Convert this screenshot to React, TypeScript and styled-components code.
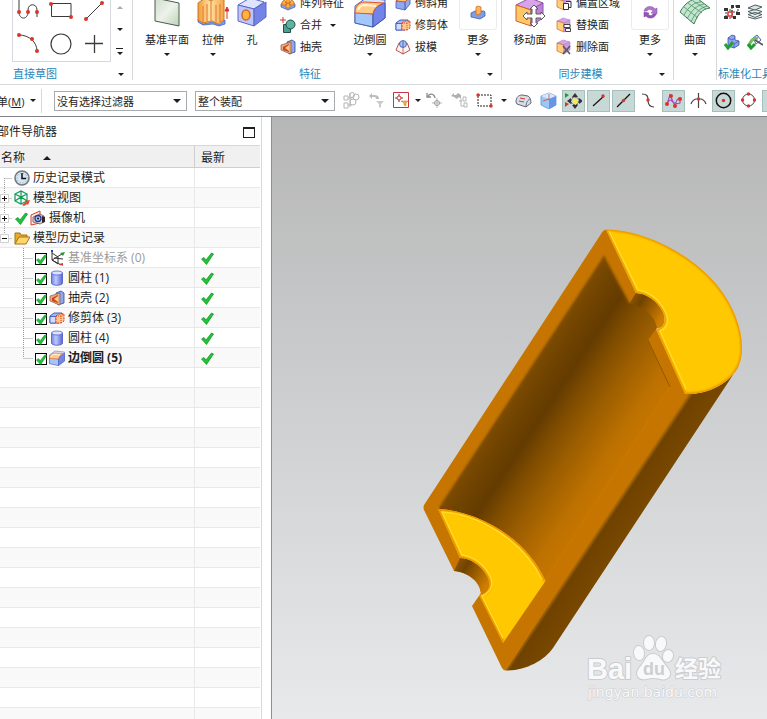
import React from "react";
import styled, { createGlobalStyle, css } from "styled-components";

const GlobalStyle = createGlobalStyle`
  * { box-sizing: border-box; }
  html, body { margin: 0; padding: 0; height: 100%; }
  body {
    font-family: "Open Sans", "Noto Sans CJK SC", sans-serif;
    font-size: 12px;
    color: #1e1e1e;
    background: #fff;
    overflow: hidden;
  }
  button, select { font: inherit; color: inherit; }
`;

const Shell = styled.div`
  display: flex;
  flex-direction: column;
  height: 100vh;
  overflow: hidden;
`;

/* ---------- ribbon ---------- */
const Ribbon = styled.header`
  display: flex;
  align-items: flex-end;
  height: 85px;
  padding-bottom: 4px;
  border-bottom: 1px solid #d5d8db;
  overflow: hidden;
  flex: none;
  font-size: 11px;
`;

const Group = styled.section<{ $w?: number }>`
  display: flex;
  flex-direction: column;
  height: 94px;
  ${(p) => (p.$w ? css`flex: 0 0 ${p.$w}px;` : css`flex: 1 0 60px;`)}
  border-right: 1px solid #d5d8db;
  white-space: nowrap;
`;

const GroupBody = styled.div<{ $pad?: number }>`
  display: flex;
  align-items: flex-end;
  height: 76px;
  padding-left: ${(p) => p.$pad ?? 0}px;
`;

const GroupFooter = styled.div<{ $left?: number }>`
  display: flex;
  align-items: center;
  height: 18px;
  padding: 6px 8px 0 ${(p) => p.$left ?? 8}px;
  color: #2a86b8;
  line-height: 12px;
`;

const FooterLabel = styled.span<{ $center?: boolean }>`
  flex: ${(p) => (p.$center ? "1" : "none")};
  text-align: center;
`;

const Launcher = styled.button`
  margin-left: auto;
  padding: 0;
  border: 0;
  background: none;
  display: flex;
`;

const CaretShape = styled.span<{ $muted?: boolean; $up?: boolean; $big?: boolean }>`
  display: block;
  width: 0;
  height: 0;
  flex: none;
  border: ${(p) => (p.$big ? 4 : 3)}px solid transparent;
  ${(p) =>
    p.$up
      ? css`border-top: 0; border-bottom-color: ${p.$muted ? "#a9a9a9" : "#1e1e1e"};`
      : css`border-bottom: 0; border-top-color: #1e1e1e;`}
`;

const BigButton = styled.button<{ $w: number }>`
  display: flex;
  flex-direction: column;
  align-items: center;
  gap: 4px;
  width: ${(p) => p.$w}px;
  padding: 0 0 2px;
  border: 0;
  background: none;
  line-height: 16px;
  flex: none;
`;

const BigLabel = styled.span`
  display: flex;
  flex-direction: column;
  align-items: center;
  height: 28px;
  gap: 5px;
`;

const MoreFrame = styled.span`
  display: flex;
  align-items: center;
  justify-content: center;
  width: 38px;
  height: 36px;
  margin-bottom: -2px;
  border: 1px solid #e9ebed;
  border-radius: 3px;
`;

const Stack = styled.div<{ $ml?: number; $w: number }>`
  display: flex;
  flex-direction: column;
  width: ${(p) => p.$w}px;
  margin-left: ${(p) => p.$ml ?? 0}px;
  padding-bottom: 4px;
  flex: none;
`;

const SmallButton = styled.button`
  display: flex;
  align-items: center;
  gap: 4px;
  height: 22px;
  padding: 0;
  border: 0;
  background: none;
  line-height: 16px;
  white-space: nowrap;
`;

const SmallText = styled.span`
  margin-right: 4px;
`;

const Gallery = styled.div`
  display: grid;
  grid-template-columns: repeat(3, 33px);
  width: 99px;
  height: 68px;
  border: 1px solid #d5d8dc;
  margin-left: 12px;
`;

const GalleryButton = styled.button`
  width: 33px;
  height: 33px;
  padding: 0;
  border: 0;
  background: none;
`;

const GalleryScroll = styled.div`
  display: flex;
  flex-direction: column;
  width: 17px;
  height: 66px;
`;

const ScrollButton = styled.button`
  display: flex;
  flex-direction: column;
  align-items: center;
  justify-content: center;
  gap: 3px;
  flex: 1;
  padding: 0;
  border: 0;
  background: none;
`;

const CaretBar = styled.span`
  width: 7px;
  height: 1px;
  background: #1e1e1e;
`;

const IconGrid = styled.div`
  display: grid;
  grid-template-columns: 16px 16px;
  gap: 14px 7px;
  padding: 0 0 12px 7px;
`;

const PlainButton = styled.button`
  display: flex;
  padding: 0;
  border: 0;
  background: none;
`;

/* ---------- selection bar ---------- */
const SelectionBar = styled.nav`
  display: flex;
  align-items: center;
  height: 32px;
  flex: none;
  border-bottom: 1px solid #7f858b;
  font-size: 11px;
  overflow: hidden;
`;

const MenuButton = styled.button`
  display: flex;
  align-items: center;
  gap: 6px;
  width: 56px;
  height: 24px;
  margin: 0 12px 0 -14px;
  padding: 0;
  border: 0;
  border-right: 1px solid #d5d8db;
  background: none;
  flex: none;
  white-space: nowrap;
`;

const SelectBox = styled.label<{ $w: number }>`
  display: flex;
  align-items: center;
  width: ${(p) => p.$w}px;
  height: 20px;
  margin-right: 8px;
  padding-right: 5px;
  border: 1px solid #a8abae;
  background: #fff;
  flex: none;
`;

const Select = styled.select`
  appearance: none;
  flex: 1;
  min-width: 0;
  height: 18px;
  padding: 1px 2px 0;
  border: 0;
  background: transparent;
  outline: none;
`;

const ToolStrip = styled.div`
  display: flex;
  gap: 2px;
  margin-left: -3px;
`;

const ToolButton = styled.button<{ $on?: boolean }>`
  display: flex;
  align-items: center;
  justify-content: center;
  width: 23px;
  height: 22px;
  padding: 0;
  border: 1px solid ${(p) => (p.$on ? "#a5c0bb" : "transparent")};
  background: ${(p) => (p.$on ? "#c8d8d6" : "none")};
  flex: none;
`;

const ToolCaret = styled.button<{ $w: number }>`
  display: flex;
  align-items: center;
  justify-content: center;
  width: ${(p) => p.$w}px;
  padding: 0;
  border: 0;
  background: none;
`;

/* ---------- main area ---------- */
const Workspace = styled.main`
  display: grid;
  grid-template-columns: 272px minmax(0, 1fr);
  flex: 1;
  min-height: 0;
`;

const SideDock = styled.div`
  display: flex;
  min-height: 0;
  background: #fff;
  border-right: 1px solid #8b9096;
  overflow: hidden;
`;

const Panel = styled.aside`
  width: 262px;
  background: #fff;
  border-right: 1px solid #d5d8db;
  overflow: hidden;
`;

const PanelTitle = styled.div`
  display: flex;
  align-items: center;
  justify-content: space-between;
  height: 28px;
  margin-left: -3px;
  padding: 2px 6px 0 0;
  line-height: 20px;
`;

const Maximize = styled.button`
  width: 12px;
  height: 11px;
  padding: 0;
  border: 1px solid #1e1e1e;
  border-top-width: 2px;
  background: #fff;
`;

const TreeTable = styled.table`
  width: 260px;
  table-layout: fixed;
  border-collapse: separate;
  border-spacing: 0;
  border-top: 1px solid #d5d8db;
`;

const HeadCell = styled.th<{ $first?: boolean }>`
  width: ${(p) => (p.$first ? "195px" : "auto")};
  height: 22px;
  padding: 2px 0 0 ${(p) => (p.$first ? 1 : 6)}px;
  background: #f0f0f0;
  border-bottom: 1px solid #cfcfcf;
  border-right: ${(p) => (p.$first ? "1px solid #cfcfcf" : "0")};
  font-weight: 400;
  text-align: left;
  line-height: 18px;
`;

const HeadInner = styled.span`
  display: flex;
  align-items: center;
  gap: 18px;
`;

const Row = styled.tr`
  &:nth-child(even) { background: #f9f9f9; }
`;

const Cell = styled.td<{ $first?: boolean }>`
  height: 20px;
  padding: 0 0 0 ${(p) => (p.$first ? 0 : 6)}px;
  border-bottom: 1px solid #e8e8e8;
  border-right: ${(p) => (p.$first ? "1px solid #e8e8e8" : "0")};
  vertical-align: top;
`;

const TreeItem = styled.div<{ $muted?: boolean; $bold?: boolean }>`
  display: flex;
  align-items: center;
  height: 20px;
  line-height: 20px;
  white-space: nowrap;
  color: ${(p) => (p.$muted ? "#9b9b9b" : "inherit")};
  font-weight: ${(p) => (p.$bold ? 700 : 400)};
  margin-bottom: -1px;
  & > svg { flex: none; }
`;

const TreeText = styled.span`
  margin-left: 3px;
`;

const MarkBox = styled.span`
  display: flex;
  margin: 0 2px 0 1px;
`;

const TickLabel = styled.label`
  display: inline-flex;
  width: 12px;
  height: 12px;
  margin: 1px 2px 0 0;
  border: 1px solid #000;
  background: #fff;
  flex: none;
  & > svg { flex: none; }
`;

const HiddenCheckbox = styled.input`
  appearance: none;
  width: 0;
  height: 0;
  margin: 0;
`;

const Viewport = styled.div`
  min-width: 0;
  min-height: 0;
  overflow: hidden;
  background: linear-gradient(#b6b6b6, #c6c7c8 33%, #d9dadc 70%, #e8e9eb);
  & > svg { display: block; width: 100%; height: 100%; }
`;

/* ---------- icons ---------- */
const ink = "#3b3b3b";
const red = "#d8352b";

const Dot = ({ x, y, r = 2 }: { x: number; y: number; r?: number }) => <circle cx={x} cy={y} r={r} fill={red} stroke="none" />;

type DrawProps = { w?: number; h?: number; box?: string; children: React.ReactNode };
const Draw = ({ w = 16, h = w, box, children }: DrawProps) => (
  <svg width={w} height={h} viewBox={box ?? `0 0 ${w} ${h}`} fill="none" display="block" aria-hidden="true">
    {children}
  </svg>
);

const sketchTools = [
  { name: "轮廓", art: <><path d="M6 5v12c0 8 9 8 9 0v-2c0-7 9-7 9 0v7" stroke={ink} /><Dot x={6} y={17} /><Dot x={15} y={17} /><Dot x={24} y={17} /></> },
  { name: "矩形", art: <><path d="M5.500 8.500h19.500v13h-19.500z" stroke={ink} /><Dot x={5} y={9} /><Dot x={25} y={22} /></> },
  { name: "直线", art: <><path d="M7 24L23 8" stroke={ink} /><Dot x={7} y={24} /><Dot x={23} y={8} /></> },
  { name: "圆弧", art: <><path d="M6 7c10 0 18 7 18 16" stroke={ink} /><Dot x={6} y={7} /><Dot x={19} y={11} /><Dot x={24} y={23} /></> },
  { name: "圆", art: <circle cx="15" cy="16" r="10" stroke={ink} strokeWidth="1.200" /> },
  { name: "点", art: <path d="M6 15.500h18M15.500 7v18" stroke={ink} strokeWidth="1.300" /> },
];

const PlaneIcon = () => (
  <Draw w={28} h={32}>
    <defs><linearGradient id="pl" x1="0" y1="0" x2="1" y2="1"><stop offset="0" stopColor="#cfdccb" /><stop offset=".5" stopColor="#edf2ea" /><stop offset="1" stopColor="#b9d3b4" /></linearGradient></defs>
    <path d="M2 2l24 5v23L2 25z" fill="url(#pl)" stroke="#4c5a50" />
  </Draw>
);
const ExtrudeIcon = () => (
  <Draw w={32}>
    <defs><linearGradient id="ex"><stop offset="0" stopColor="#f09a38" /><stop offset=".45" stopColor="#ffe2a6" /><stop offset="1" stopColor="#f2a548" /></linearGradient></defs>
    <path d="M1 23l5 5 10-2 6 3 6-5v4l-6 2-6-2-10 1-5-3z" fill="#7fa0e8" stroke="#4666c0" strokeWidth=".8" />
    <path d="M1 7l7-5 6 3 7-4 6 3v20l-6 4-6-3-9 2-5-3z" fill="url(#ex)" stroke="#d07818" />
    <path d="M6 10v17M10 8v18M14 5v20M19 9v18M23 8v18" stroke="#e4762a" />
    <path d="M30 23V13M28 15l2-4 2 4z" stroke={red} fill={red} />
  </Draw>
);
const HoleIcon = () => (
  <Draw w={32}>
    <path d="M2 9l12-7 14 4-10 7z" fill="#dde4ff" stroke="#5b68c8" />
    <path d="M2 9l16 4v17L2 25z" fill="#bcc6fb" stroke="#5b68c8" />
    <path d="M18 13l12-7v15l-12 9z" fill="#7483e6" stroke="#5b68c8" />
    <ellipse cx="10" cy="19" rx="4" ry="5" fill="#ffb43c" stroke="#d8642b" strokeWidth="1.500" />
  </Draw>
);
const EdgeBlendIcon = ({ w = 32 }: { w?: number }) => (
  <Draw w={w} box="0 0 32 32">
    <path d="M1 16V10L12 2l19 2v18L19 31 1 27z" fill="#d8e4ff" stroke="#4863b4" />
    <path d="M1 16v11l18 4V18z" fill="#a4c6fb" stroke="#4863b4" />
    <path d="M19 31V17c1-4 5-8 12-10v15z" fill="#7284ea" stroke="#4355b0" />
    <path d="M1 17c0-7 4-11 10-11l19 1c-6 2-10 5-11 11z" fill="#ffcb86" stroke="#e0542b" />
    <path d="M4 14c1-4 4-5 8-5l10 1" stroke="#fff3d8" strokeWidth="2" />
  </Draw>
);
const PatternIcon = () => (
  <Draw><path d="M1 9l7-3 7 3v3l-7 3-7-3z" fill="#83a3ea" stroke="#4668bb" strokeWidth=".8" /><path d="M2 7l2-2 2 2v3H2zM6 5l2-3 2 3v3H6zM6 10l2-2 2 2v3H6zM10 7l2-2 2 2v3h-4z" fill="#ffab3d" stroke="#c96a1a" strokeWidth=".7" /></Draw>
);
const UniteIcon = () => (
  <Draw><path d="M3 0v6M0 3h6" stroke={red} /><path d="M3.500 7.500h7v8h-7z" fill="#4ba090" stroke="#244e48" /><circle cx="10.500" cy="7.500" r="4.500" fill="#5cb3a0" stroke="#244e48" /></Draw>
);
const ShellIcon = () => (
  <Draw><path d="M7 3l5-2 3 2v10l-6 2z" fill="#8fa8ee" stroke="#33478d" strokeWidth=".8" /><path d="M1 6l10-3v12l-3-1-7-3z" fill="#f0a878" stroke="#8a5a4a" strokeWidth=".7" /><path d="M3 8l6-3v8l-6-2z" fill="#c9441f" /><path d="M5 9l4-3v6z" fill="#ffce8a" /></Draw>
);
const ChamferIcon = () => (
  <Draw><path d="M1 6l6-4h8v7l-5 6-9-2z" fill="#8fa9ee" stroke="#4458a8" strokeWidth=".8" /><path d="M1 6l6-4h8l-5 5z" fill="#ffc074" stroke="#d2502a" /><path d="M10 7v8" stroke="#4458a8" /></Draw>
);
const TrimIcon = () => (
  <Draw>
    <path d="M1 6l4-3h8v8l-3 2H1z" fill="#9fb8f7" stroke="#3a4fb8" strokeWidth=".9" />
    <path d="M1 6.500h6V13H1z" fill="#cfdcff" stroke="#3a4fb8" strokeWidth=".8" />
    <path d="M7 6l3-2h5v7l-3 2H7z" fill="#ffc98a" stroke="#d2402a" strokeDasharray="2 1" />
    <path d="M12 6v7M7 6h5l3-2" stroke="#e2402a" strokeDasharray="1 1" />
  </Draw>
);
const DraftIcon = () => (
  <Draw><path d="M4 4L1 11l7 4 7-4-3-7z" fill="#f4f5fb" stroke="#c0392b" strokeWidth=".9" /><path d="M8 4v11M4 4l4 4 4-4" stroke="#d8452b" strokeWidth=".8" /><circle cx="8" cy="5" r="3.500" fill="#a9c0f4" stroke="#3c56a8" strokeWidth=".8" /><path d="M8 2v6" stroke="#3c56a8" strokeWidth=".8" /></Draw>
);
const MoreFeatureIcon = () => (
  <Draw><path d="M1 9l4-2h9l1 1v4l-5 3-9-2z" fill="#7f9ce0" stroke="#4260a8" strokeWidth=".8" /><path d="M6 3l2-1 3 1v6l-3 2-2-1z" fill="#ffb35e" stroke="#d07020" strokeWidth=".8" /></Draw>
);
const MoveFaceIcon = () => (
  <Draw w={32}>
    <path d="M2 9L16 2l13 5-12 7z" fill="#d7a4ea" stroke="#8a55a6" /><path d="M2 9l15 5v16L2 25z" fill="#ffc766" stroke="#d0632a" /><path d="M17 14l12-7v15l-12 8z" fill="#bf82d8" stroke="#8a55a6" />
    <path d="M20 9l4 4h-2v5h5v-2l4 4-4 4v-2h-5v5h2l-4 4-4-4h2v-5h-5v2l-4-4 4-4v2h5v-5h-2z" fill="#fff" stroke="#5a5a5a" />
  </Draw>
);
const FaceIcon = ({ overlay }: { overlay: React.ReactNode }) => (
  <Draw><path d="M1 4l6-3 7 2-6 3z" fill="#d7a4ea" stroke="#b07cc8" strokeWidth=".6" /><path d="M1 4l7 2v9l-7-3z" fill="#ffd07a" stroke="#d0632a" strokeWidth=".7" /><path d="M8 6l6-3v8l-6 4z" fill="#cf9ce4" stroke="#b07cc8" strokeWidth=".6" />{overlay}</Draw>
);
const CycleIcon = () => (
  <Draw><path d="M2 7c1-5 8-6 11-2l2-1v6L9 9l2-2c-2-2-5-2-6 0z" fill="#b072cc" stroke="#8b4bab" strokeWidth=".5" /><path d="M14 10c-1 5-8 5-10 2l-2 1V8l5 1-1 1c2 2 4 2 5 0z" fill="#9653b6" stroke="#7b3e9a" strokeWidth=".5" /></Draw>
);
const SurfaceIcon = () => (
  <Draw w={32}>
    <path d="M1 16C6 7 12 3 19 3l12 9c-8 1-12 6-16 16z" fill="#c4e6ce" stroke="#3d7c55" />
    <path d="M5 19C10 10 16 6 22 6M8 23C13 13 19 9 25 8M12 26C16 17 21 12 28 10M5 11l14 11M9 7l14 10M14 5l13 8" stroke="#4c9068" strokeWidth=".8" />
  </Draw>
);

const StdIcons = [
  { name: "装配约束", art: <><path d="M2 6h6v8H2zM8 2h6v6H8z" stroke="#3a3a3a" strokeDasharray="2 1" /><path d="M0 4h4v3H0zM0 12h4v3H0zM12 1h4v3h-4zM12 8h4v3h-4zM7 1h3v3H7zM9 12h3v3H9z" fill="#333" /><path d="M4 8h4v4H4z" fill="#fff" stroke={red} strokeWidth="1.500" /></> },
  { name: "图层", art: <><path d="M1 10.500l7-2 7 2-7 3zM1 7.500l7-2 7 2-7 3z" fill="#e7eeec" stroke="#4d5d61" /><path d="M1 4l7-3 7 2-7 3z" fill="#dbe5e3" stroke="#4d5d61" /><path d="M1 13l7 2 7-2" stroke="#4d5d61" /></> },
  { name: "检查", art: <><path d="M4 4l4-3 3 1v4l4 1v4l-5 3-6-2z" fill="#8ea6ee" stroke="#3850a0" strokeWidth=".8" /><path d="M4 4l4 2 3-2M10 14v-4l5-3" stroke="#3850a0" strokeWidth=".7" /><path d="M1 10l3 4 5-6" stroke="#24a038" strokeWidth="3" /></> },
  { name: "校验", art: <><path d="M6 4l4-3 4 5-5 4z" fill="#f5f7ff" stroke="#4a60b8" /><path d="M2 13C3 6 7 4 11 4" stroke="#6fbf60" strokeWidth="3" /><path d="M8 6l8 5" stroke="#555" strokeWidth="1.500" /><path d="M1 10l3 4 4-4" stroke="#1e9a30" strokeWidth="3" /></> },
];

const grayTint = "#b5b5b5";
const barTools: { name: string; on?: boolean; caret?: number; art: React.ReactNode }[] = [
  { name: "装配导航", art: <><path d="M1 4h4v4H1zM1 11h4v5H1zM5 6h4M5 13h4M7 1v14" stroke={grayTint} /><circle cx="9" cy="3" r="2.500" stroke={grayTint} /><circle cx="13" cy="5" r="3" stroke={grayTint} /><circle cx="10" cy="10" r="3" stroke={grayTint} /></> },
  { name: "过滤", art: <><path d="M1 4l3-3v2c4 0 7 0 7 4H8c0-2-1-2-4-2v2z" fill="#bdbdbd" /><path d="M8 9h8l-3 3v4l-2-1v-3z" fill="#cacaca" /></> },
  { name: "选择过滤器", caret: 6, art: <><path d="M.5.5h15v15H.5z" stroke="#c8343c" /><path d="M6 2v8M2 6h8" stroke="#444" /><circle cx="6" cy="6" r="2" fill="#fff" stroke={red} /><path d="M8 9h7l-2 2v3l-2-1v-2z" fill="#f2b03a" stroke="#b77b1a" strokeWidth=".5" /></> },
  { name: "定向", art: <><path d="M2 5c1-4 6-4 7 1M1 1v4h4" stroke="#8a8a8a" strokeWidth="1.300" /><path d="M11 6v10M6 11h10" stroke={grayTint} /><circle cx="11" cy="11" r="2.500" stroke="#9c9c9c" /></> },
  { name: "查找", art: <><path d="M0 4l3-3v2h2l2-2 3 2v4L8 5 6 7 3 5z" fill="#b0b0b0" /><path d="M8 9h3M10 7v7h3M12 5h3v4h-3zM13 11h3v4h-3z" stroke={grayTint} /></> },
  { name: "框选", caret: 12, art: <><path d="M2 3h13v11H2z" stroke="#222" strokeDasharray="2 1" /><Dot x={2} y={3} r={1.700} /><Dot x={15} y={14} r={1.700} /></> },
  { name: "着色", art: <><path d="M1 10c0-5 3-7 6-7l6 1c2 1 3 4 3 7l-5 4-9-3z" fill="#d9dde6" stroke="#606878" /><path d="M11 15c0-5 2-7 4-8" stroke="#606878" /><path d="M5 6l5 1" stroke={red} /><path d="M4 9l5 1" stroke="#606878" /></> },
  { name: "视图方向", art: <><path d="M1 4l8-3 7 3v9l-7 4-8-4z" fill="#9cc8f6" stroke="#5c93d0" strokeWidth=".8" /><path d="M1 4l8 3 7-3-7-3z" fill="#d6e9ff" /><path d="M9 7l7-3v9l-7 4z" fill="#6797e2" /><path d="M9 2v6M3 9l6-2" stroke={red} strokeWidth=".7" /></> },
  { name: "启用捕捉", on: true, art: <><path d="M0 1l4 2-4 3z" fill="#18a030" /><path d="M0 10l4 2-4 3z" fill={red} /><path d="M10 1l3 4h-6zM10 17l3-4h-6zM2 9l4-3v6zM18 9l-4-3v6z" fill="#333" /><circle cx="10" cy="9" r="4" stroke="#333" strokeDasharray="2 1" /><circle cx="10" cy="9" r="2.500" fill="#ffe94a" /></> },
  { name: "端点", on: true, art: <><path d="M3 14L14 4" stroke="#111" strokeWidth="1.200" /><Dot x={13} y={4} r={1.700} /></> },
  { name: "中点", on: true, art: <><path d="M2 15L15 2" stroke="#111" strokeWidth="1.200" /><Dot x={8.500} y={8.500} r={1.700} /></> },
  { name: "控制点", art: <><path d="M2 2c5 0 6 2 6 6s1 7 6 7" stroke="#444" strokeWidth="1.200" /><Dot x={8} y={8} r={1.700} /></> },
  { name: "交点", on: true, art: <><path d="M2 12L5 3l5 11c1-5 2-8 5-8v5c-4 2-8-1-9-3-2 0-3 2-4 4" stroke="#a34cc4" strokeWidth="1.200" /><Dot x={2} y={12} /><Dot x={6} y={4} /><Dot x={10} y={14} /><Dot x={15} y={7} /></> },
  { name: "圆弧交点", art: <><path d="M8.500 1v15M1 12c2-7 13-7 15 0" stroke="#444" strokeWidth="1.200" /><Dot x={8.500} y={7} r={1.700} /></> },
  { name: "圆心", on: true, art: <><circle cx="8.500" cy="8.500" r="7.200" stroke="#111" strokeWidth="1.500" /><Dot x={8.500} y={8.500} r={1.700} /></> },
  { name: "象限点", art: <><circle cx="8.500" cy="8" r="6" stroke="#444" /><Dot x={8.500} y={2} r={1.700} /><Dot x={8.500} y={14} r={1.700} /><Dot x={2.500} y={8} r={1.700} /><Dot x={14.500} y={8} r={1.700} /></> },
  { name: "现有点", on: true, art: <path d="M3 8h10M8 3v10" stroke="#111" /> },
];

const CheckArt = () => <path d="M.5 7L3 5.500 5 8 10.500 1l2 1L5.500 12.500z" fill="#1fc336" stroke="#109024" strokeWidth=".7" />;
const CheckIcon = () => <Draw w={13}><CheckArt /></Draw>;

const ClockIcon = () => (
  <Draw><circle cx="8" cy="8" r="7" fill="#d4e6f4" stroke="#75797e" strokeWidth="1.600" /><circle cx="8" cy="8" r="5" stroke="#8f9ba8" strokeDasharray="1 2" /><path d="M8 3v5.500h4" stroke="#111" strokeWidth="1.500" /></Draw>
);
const ModelViewIcon = () => (
  <Draw><path d="M1 4l6-3 6 3v7l-6 3-6-3zM1 4l6 3 6-3M7 7v7M7 1v6M1 11l6-4 6 4" stroke="#0f9b58" strokeWidth="1.200" /><path d="M8 15l4-3-1-1 5-1-2 5-1-1-3 2z" fill="#e8452a" /></Draw>
);
const CameraIcon = () => (
  <Draw><path d="M1 5l9-4v12l-9 2z" fill="#ffe9e2" stroke="#d8402b" /><path d="M3 7l7-3 4 2v6l-4 2-7-2z" fill="#d9d2d6" stroke="#7a3a34" strokeWidth=".7" /><circle cx="8" cy="8.500" r="3" fill="#a8c4f0" stroke="#1f3d9a" strokeWidth="1.300" /><circle cx="8" cy="8.500" r="1" fill="#111" /><path d="M12 6l3 1v5l-3 1z" fill="#3a2422" /></Draw>
);
const FolderIcon = () => (
  <Draw><path d="M1 14V3h5l1 2h6v3" fill="#e5a92c" stroke="#a87412" /><path d="M1 14l4-7h11l-4 7z" fill="#ffd768" stroke="#a87412" /></Draw>
);
const CsysIcon = () => (
  <Draw><path d="M3 1v9l9 5M3 10l10-6M3 3l6 4v7l-6-4M5 8l9 1" stroke="#333" /><path d="M2 0h2v2H2z" fill="#2238d0" /><path d="M11 3l5-1-2 4z" fill="#1d9a30" /><path d="M10 14l4 2v-3z" fill={red} /></Draw>
);
const CylinderIcon = () => (
  <Draw>
    <defs><linearGradient id="cy"><stop offset="0" stopColor="#7383e8" /><stop offset=".4" stopColor="#bcc8ff" /><stop offset="1" stopColor="#5766d6" /></linearGradient></defs>
    <path d="M2.500 3v10c0 3 11 3 11 0V3z" fill="url(#cy)" stroke="#4b59c4" strokeWidth=".8" /><ellipse cx="8" cy="3" rx="5.500" ry="2" fill="#dbe2ff" stroke="#5563cc" strokeWidth=".8" />
  </Draw>
);

/* ---------- tree data ---------- */
type Node = { text: string; level: 0 | 1; icon: React.ReactNode; expander?: "+" | "-"; last?: boolean; first?: boolean; mark?: boolean; muted?: boolean; bold?: boolean };
const nodes: Node[] = [
  { text: "历史记录模式", level: 0, icon: <ClockIcon />, first: true },
  { text: "模型视图", level: 0, icon: <ModelViewIcon />, expander: "+" },
  { text: "摄像机", level: 0, icon: <CameraIcon />, expander: "+", mark: true },
  { text: "模型历史记录", level: 0, icon: <FolderIcon />, expander: "-", last: true },
  { text: "基准坐标系 (0)", level: 1, icon: <CsysIcon />, muted: true },
  { text: "圆柱 (1)", level: 1, icon: <CylinderIcon /> },
  { text: "抽壳 (2)", level: 1, icon: <ShellIcon /> },
  { text: "修剪体 (3)", level: 1, icon: <TrimIcon /> },
  { text: "圆柱 (4)", level: 1, icon: <CylinderIcon /> },
  { text: "边倒圆 (5)", level: 1, icon: <EdgeBlendIcon w={16} />, last: true, bold: true },
];
const emptyRows = Array.from({ length: 60 }, (_, i) => i);

const Guide = ({ node }: { node: Node }) => {
  const x = node.level === 0 ? 4.5 : 23.5;
  const w = node.level === 0 ? 14 : 35;
  return (
    <Draw w={w} h={20}>
      <path d={`M${x} ${node.first ? 10 : 0}V${node.last ? 10 : 20}M${x} 10.500H${w - 2}`} stroke="#9a9a9a" strokeDasharray="1 1" />
      {node.expander && (
        <>
          <path d="M.5 6.500h8v8h-8z" fill="#fff" stroke="#d0d0d0" />
          <path d={node.expander === "+" ? "M2 10.500h5M4.500 8v5" : "M2 10.500h5"} stroke="#111" />
        </>
      )}
    </Draw>
  );
};

const TreeRow = ({ node }: { node: Node }) => (
  <Row>
    <Cell $first>
      <TreeItem $muted={node.muted} $bold={node.bold}>
        <Guide node={node} />
        {node.mark && <MarkBox><CheckIcon /></MarkBox>}
        {node.level === 1 && (
          <TickLabel aria-label={node.text}>
            <HiddenCheckbox type="checkbox" defaultChecked />
            <Draw w={11} box="0 0 13 13"><CheckArt /></Draw>
          </TickLabel>
        )}
        {node.icon}
        <TreeText>{node.text}</TreeText>
      </TreeItem>
    </Cell>
    <Cell>{node.level === 1 && <TreeItem><CheckIcon /></TreeItem>}</Cell>
  </Row>
);

const Big = ({ w, icon, label, caret = true, more }: { w: number; icon: React.ReactNode; label: string; caret?: boolean; more?: boolean }) => (
  <BigButton $w={w}>
    {more ? <MoreFrame>{icon}</MoreFrame> : icon}
    <BigLabel>{label}{caret && <CaretShape />}</BigLabel>
  </BigButton>
);
const Small = ({ icon, label, caret }: { icon: React.ReactNode; label: string; caret?: boolean }) => (
  <SmallButton>{icon}<SmallText>{label}</SmallText>{caret && <CaretShape />}</SmallButton>
);

/* Half-cut hollow cylinder with filleted edges */
const Model = () => (
  <svg viewBox="272 117 495 602" preserveAspectRatio="xMidYMid slice" role="img" aria-label="模型">
    <defs>
      <linearGradient id="inside" gradientUnits="userSpaceOnUse" x1="439" y1="508" x2="548" y2="580">
        <stop offset="0" stopColor="#7c4b00" /><stop offset=".1" stopColor="#714400" /><stop offset=".27" stopColor="#643b00" /><stop offset=".4" stopColor="#7d4b00" />
        <stop offset=".6" stopColor="#9c5e00" /><stop offset=".85" stopColor="#bd7100" /><stop offset="1" stopColor="#c67600" />
      </linearGradient>
      <linearGradient id="outside" gradientUnits="userSpaceOnUse" x1="590" y1="541" x2="629" y2="567">
        <stop offset="0" stopColor="#c47500" /><stop offset=".1" stopColor="#6f4200" /><stop offset=".5" stopColor="#774700" /><stop offset="1" stopColor="#804c00" />
      </linearGradient>
      <linearGradient id="bore" x1="0" y1="0" x2="1" y2=".6">
        <stop offset="0" stopColor="#9a5c00" /><stop offset=".35" stopColor="#704300" /><stop offset=".7" stopColor="#a46200" /><stop offset="1" stopColor="#cf7e00" />
      </linearGradient>
      <filter id="soft" x="-10%" y="-10%" width="120%" height="120%"><feGaussianBlur stdDeviation="1" /></filter>
      <clipPath id="topClip"><path d="M606 229.500C645 230 691 254 717 285C739 312 747 345 739 365C731 383 708 395 685 394L656 329C663 329 667 321 663 312C658 302 647 293 636 293z" /></clipPath>
      <clipPath id="baseClip"><path d="M438 509C478 511 527 538 545.500 581L503 643L479 595C489 594 492 584 487 576C481 565 470 558 460 558z" /></clipPath>
    </defs>
    <path d="M685 394C708 395 731 383 739 365L729 381L553 648C544 661 525 671 505 670.500z" fill="url(#outside)" />
    <path d="M606 229.500Q603 230 601 234L424 505Q423 508 424 510L454 571C466 572 480 580 481 593L472 606L501 666Q503 671 506 670L686 394L656 329L650 300L636 293z" fill="#c67600" />
    <path d="M604 257L629 303L640 298L660 320L657 328L648 340L670 387L545 581C527 538 478 511 439 509L440 507z" fill="url(#inside)" />
    <path d="M440 507L604 257L629 303" stroke="#8b5300" strokeWidth="2" fill="none" filter="url(#soft)" />
    <path d="M648 340L670 387" stroke="#925700" fill="none" />
    <path d="M670 387L545 581" stroke="#ca7b00" fill="none" />
    <path d="M636 293C647 293 658 302 663 312C667 321 663 329 657 328C655 316 643 305 629 304z" fill="url(#bore)" />
    <path d="M460 558C470 558 481 565 487 576C492 584 489 594 481 594C480 580 466 572 454 571z" fill="url(#bore)" />
    <g clipPath="url(#topClip)">
      <path d="M600 220H750V400H600z" fill="#ffc800" />
      <path d="M606 229.500C645 230 691 254 717 285C739 312 747 345 739 365C731 383 708 395 685 394" fill="none" stroke="#e58700" strokeWidth="2.500" filter="url(#soft)" />
      <path d="M685 394L656 329C663 329 667 321 663 312C658 302 647 293 636 293L606 229.500" fill="none" stroke="#ee9400" strokeWidth="3" filter="url(#soft)" />
      <path d="M686 389L660 331C669 327 669 319 665 311C659 299 648 291 638 290L609 231" fill="none" stroke="#ffdc25" strokeWidth="1.500" />
    </g>
    <g clipPath="url(#baseClip)">
      <path d="M430 500H550V650H430z" fill="#ffc800" />
      <path d="M503 643L479 595C489 594 492 584 487 576C481 565 470 558 460 558L438 509C478 511 527 538 545.500 581" fill="none" stroke="#ed9200" strokeWidth="4" filter="url(#soft)" />
      <path d="M503 638L482 596C493 591 494 582 489 574C482 562 471 556 462 555L442 512C478 514 523 540 542 580" fill="none" stroke="#ffdc25" strokeWidth="1.500" />
    </g>
    <g fill="#f8f9fa" stroke="#cbccce" strokeWidth="2" paintOrder="stroke" strokeLinejoin="round">
      <text x="587" y="679" fontFamily="Liberation Sans, sans-serif" fontWeight="700" fontSize="29">Bai</text>
      <ellipse cx="639" cy="653" rx="5" ry="7" transform="rotate(-8 639 653)" />
      <ellipse cx="649" cy="643" rx="5" ry="7" />
      <ellipse cx="661" cy="644" rx="5" ry="7" transform="rotate(10 661 644)" />
      <ellipse cx="668" cy="656" rx="5" ry="6" transform="rotate(15 668 656)" />
      <path d="M653 654C660 654 662 662 667 667C674 675 668 681 660 679Q653 677 647 679C638 681 634 674 640 667C645 662 646 654 653 654z" />
      <text x="675" y="677" fontFamily="Noto Sans CJK SC, sans-serif" fontWeight="700" fontSize="23">经验</text>
      <text x="588" y="697" fontFamily="DejaVu Sans, sans-serif" fontSize="14" strokeWidth="1">jingyan.baidu.com</text>
    </g>
    <text x="643" y="675" fontFamily="Liberation Sans, sans-serif" fontWeight="700" fontSize="18" fill="#cdced0">du</text>
  </svg>
);

export default function App() {
  return (
    <Shell>
      <GlobalStyle />
      <Ribbon>
        <Group $w={133}>
          <GroupBody>
            <Gallery>
              {sketchTools.map((t) => (
                <GalleryButton key={t.name} aria-label={t.name}><Draw w={33}>{t.art}</Draw></GalleryButton>
              ))}
            </Gallery>
            <GalleryScroll>
              <ScrollButton aria-label="上一行"><CaretShape $up $muted /></ScrollButton>
              <ScrollButton aria-label="下一行"><CaretShape /></ScrollButton>
              <ScrollButton aria-label="展开"><CaretBar /><CaretShape /></ScrollButton>
            </GalleryScroll>
          </GroupBody>
          <GroupFooter $left={13}>
            <FooterLabel>直接草图</FooterLabel>
            <Launcher aria-label="直接草图选项"><CaretShape /></Launcher>
          </GroupFooter>
        </Group>

        <Group $w={369}>
          <GroupBody $pad={10}>
            <Big w={48} icon={<PlaneIcon />} label="基准平面" />
            <Big w={44} icon={<ExtrudeIcon />} label="拉伸" />
            <Big w={34} icon={<HoleIcon />} label="孔" caret={false} />
            <Stack $ml={11} $w={68}>
              <Small icon={<PatternIcon />} label="阵列特征" />
              <Small icon={<UniteIcon />} label="合并" caret />
              <Small icon={<ShellIcon />} label="抽壳" />
            </Stack>
            <Big w={44} icon={<EdgeBlendIcon />} label="边倒圆" />
            <Stack $ml={3} $w={64}>
              <Small icon={<ChamferIcon />} label="倒斜角" />
              <Small icon={<TrimIcon />} label="修剪体" />
              <Small icon={<DraftIcon />} label="拔模" />
            </Stack>
            <Big w={38} icon={<MoreFeatureIcon />} label="更多" more />
          </GroupBody>
          <GroupFooter $left={0}>
            <FooterLabel $center>特征</FooterLabel>
            <Launcher aria-label="特征选项"><CaretShape /></Launcher>
          </GroupFooter>
        </Group>

        <Group $w={172}>
          <GroupBody $pad={6}>
            <Big w={44} icon={<MoveFaceIcon />} label="移动面" caret={false} />
            <Stack $ml={4} $w={75}>
              <Small icon={<FaceIcon overlay={<path d="M7.500 8.500h5v6h-5zM10 6.500h5v6h-2" fill="#fff" stroke="#333" />} />} label="偏置区域" />
              <Small icon={<FaceIcon overlay={<path d="M8 7.500h6v3H8zM9.500 11.500h5v3h-5z" fill="#fff" stroke="#444" />} />} label="替换面" />
              <Small icon={<FaceIcon overlay={<path d="M7 7l7 8M14 7l-7 8" stroke="#555" strokeWidth="1.500" />} />} label="删除面" />
            </Stack>
            <Big w={38} icon={<CycleIcon />} label="更多" more />
          </GroupBody>
          <GroupFooter $left={0}>
            <FooterLabel $center>同步建模</FooterLabel>
            <Launcher aria-label="同步建模选项"><CaretShape /></Launcher>
          </GroupFooter>
        </Group>

        <Group $w={43}>
          <GroupBody>
            <Big w={42} icon={<SurfaceIcon />} label="曲面" />
          </GroupBody>
          <GroupFooter />
        </Group>

        <Group>
          <GroupBody>
            <IconGrid>
              {StdIcons.map((t) => <PlainButton key={t.name} aria-label={t.name}><Draw>{t.art}</Draw></PlainButton>)}
            </IconGrid>
          </GroupBody>
          <GroupFooter $left={1}><FooterLabel>标准化工具</FooterLabel></GroupFooter>
        </Group>
      </Ribbon>

      <SelectionBar>
        <MenuButton><span>菜单(<u>M</u>)</span><CaretShape /></MenuButton>
        <SelectBox $w={133}>
          <Select aria-label="选择过滤器"><option>没有选择过滤器</option></Select>
          <CaretShape $big />
        </SelectBox>
        <SelectBox $w={140}>
          <Select aria-label="选择范围"><option>整个装配</option></Select>
          <CaretShape $big />
        </SelectBox>
        <ToolStrip>
          {barTools.map((t) => (
            <React.Fragment key={t.name}>
              <ToolButton $on={t.on} aria-label={t.name}><Draw w={17}>{t.art}</Draw></ToolButton>
              {t.caret && <ToolCaret $w={t.caret} aria-label={`${t.name}选项`}><CaretShape /></ToolCaret>}
            </React.Fragment>
          ))}
        </ToolStrip>
      </SelectionBar>

      <Workspace>
        <SideDock>
          <Panel>
            <PanelTitle><span>部件导航器</span><Maximize aria-label="最大化" /></PanelTitle>
            <TreeTable>
              <thead>
                <tr>
                  <HeadCell $first><HeadInner>名称<CaretShape $up $big /></HeadInner></HeadCell>
                  <HeadCell>最新</HeadCell>
                </tr>
              </thead>
              <tbody>
                {nodes.map((n) => <TreeRow key={n.text} node={n} />)}
                {emptyRows.map((i) => <Row key={i}><Cell $first /><Cell /></Row>)}
              </tbody>
            </TreeTable>
          </Panel>
        </SideDock>
        <Viewport><Model /></Viewport>
      </Workspace>
    </Shell>
  );
}
